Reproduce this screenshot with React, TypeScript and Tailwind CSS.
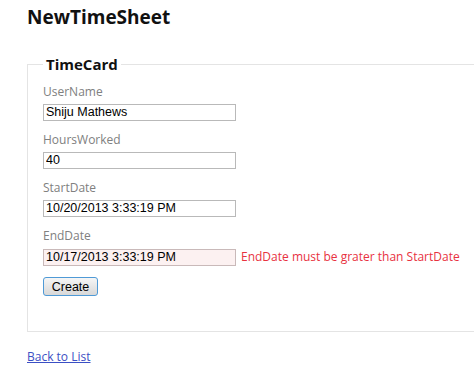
export default function App() {
  const fields = [
    { label: 'UserName', value: 'Shiju Mathews' },
    { label: 'HoursWorked', value: '40' },
    { label: 'StartDate', value: '10/20/2013 3:33:19 PM' },
  ];

  return (
    <div className="w-[474px] h-[366px] overflow-hidden bg-white pl-[27px] pt-[5px] font-['Open_Sans',sans-serif]">
      <h2 className="text-[19px] leading-[24px] font-bold text-[#111]">NewTimeSheet</h2>

      <fieldset className="mt-[25px] w-[470px] border border-[#e4e4e4] pl-[15px] pb-[35px]">
        <legend className="px-[3px] text-[15px] leading-[20px] font-bold text-[#111]">TimeCard</legend>

        <div className="pt-[9px]">
          {fields.map((f) => (
            <div key={f.label} className="mb-[10px]">
              <div className="text-[12px] leading-[18px] text-[#808080] mb-[3px]">{f.label}</div>
              <input
                readOnly
                value={f.value}
                className="block w-[193px] h-[17px] border border-[#b9b9b9] bg-white px-[2px] text-[12.5px] text-black font-['Liberation_Sans',Arial,sans-serif] outline-none"
              />
            </div>
          ))}

          {/* EndDate with validation error */}
          <div className="mb-[11px]">
            <div className="text-[12px] leading-[18px] text-[#808080] mb-[3px]">EndDate</div>
            <div className="flex items-center">
              <input
                readOnly
                value="10/17/2013 3:33:19 PM"
                className="block w-[193px] h-[17px] border border-[#c9b9b9] bg-[#fcf1f1] px-[2px] text-[12.5px] text-black font-['Liberation_Sans',Arial,sans-serif] outline-none"
              />
              <span className="ml-[5px] text-[12px] leading-[18px] text-[#e8323f]">
                EndDate must be grater than StartDate
              </span>
            </div>
          </div>

          <button className="block w-[55px] h-[19px] rounded-[3px] border border-[#4f9ad6] bg-gradient-to-b from-[#f6f6f6] to-[#d8d8d8] text-[12.5px] leading-[16px] text-black font-['Liberation_Sans',Arial,sans-serif]">
            Create
          </button>
        </div>
      </fieldset>

      <div className="mt-[16px] leading-[14px]">
        <a href="#" className="text-[12px] leading-[14px] text-[#3b4fc4] underline">
          Back to List
        </a>
      </div>
    </div>
  );
}
